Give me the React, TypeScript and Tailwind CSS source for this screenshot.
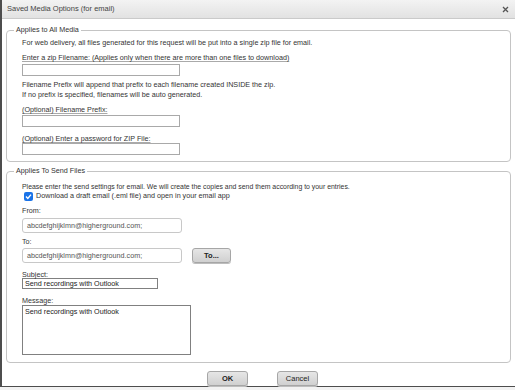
import React from "react";

const font = { fontFamily: '"Liberation Sans", Arial, sans-serif' };

const Label = ({ children, className = "" }: { children: React.ReactNode; className?: string }) => (
  <div className={`h-[10px] leading-[10px] text-[7.2px] text-[#333] whitespace-nowrap ${className}`}>{children}</div>
);

const ZipInput = ({ className = "" }: { className?: string }) => (
  <input
    type="text"
    className={`block w-[158px] h-[12px] border border-[#a9a9a9] bg-white outline-none ${className}`}
  />
);

const GrayButton = ({ label, className = "" }: { label: string; className?: string }) => (
  <button
    className={`h-[15px] rounded-[3px] border border-[#a6a6a6] bg-gradient-to-b from-[#e6e6e6] to-[#d0d0d0] text-[7.5px] leading-[13px] text-[#222] shadow-[0_1px_0_#bdbdbd] ${className}`}
  >
    {label}
  </button>
);

export default function App() {
  return (
    <div style={font} className="w-[515px] h-[390px] bg-[#f2f2f2] overflow-hidden">
      <div className="h-[387px] bg-white border-l-[2px] border-b-[1px] border-[#4d4d4d] flex flex-col">
        {/* title bar */}
        <div className="h-[19px] shrink-0 flex items-center justify-between pl-[5px] pr-[6px] bg-gradient-to-b from-[#f3f3f3] to-[#e2e2e2] border-b border-[#cacaca]">
          <span className="text-[7.5px] text-[#444]">Saved Media Options (for email)</span>
          <svg width="7" height="7" viewBox="0 0 7 7" className="mt-[1px]">
            <path d="M1 1L6 6M6 1L1 6" stroke="#555" strokeWidth="1.3" />
          </svg>
        </div>

        <div className="px-[4px]">
          {/* Applies to All Media */}
          <fieldset className="mt-[6px] border border-[#c4c4c4] rounded-[4px] pl-[15px] pr-[10px] pt-[3px] pb-[6px]">
            <legend className="ml-[-8px] px-[2px] h-[10px] leading-[10px] text-[7.2px] text-[#333]">Applies to All Media</legend>
            <Label>For web delivery, all files generated for this request will be put into a single zip file for email.</Label>
            <Label className="mt-[5px] underline decoration-[#aaa]">
              Enter a zip Filename: (Applies only when there are more than one files to download)
            </Label>
            <ZipInput className="mt-[1px]" />
            <Label className="mt-[4px]">Filename Prefix will append that prefix to each filename created INSIDE the zip.</Label>
            <Label>If no prefix is specified, filenames will be auto generated.</Label>
            <Label className="mt-[5px] underline decoration-[#aaa]">(Optional) Filename Prefix:</Label>
            <ZipInput />
            <Label className="mt-[7px] underline decoration-[#aaa]">(Optional) Enter a password for ZIP File:</Label>
            <ZipInput className="-mt-[1px]" />
          </fieldset>

          {/* Applies To Send Files */}
          <fieldset className="mt-[4px] border border-[#c4c4c4] rounded-[4px] pl-[15px] pr-[10px] pt-[6px] pb-[7px]">
            <legend className="ml-[-8px] px-[2px] h-[10px] leading-[10px] text-[7.2px] text-[#333]">Applies To Send Files</legend>
            <div className="h-[9px] leading-[9px] text-[6.9px] text-[#333] whitespace-nowrap">
              Please enter the send settings for email. We will create the copies and send them according to your entries.
            </div>
            <div className="h-[10px] flex items-center gap-[3px] pl-[2px] text-[7.2px] text-[#333]">
              <span className="w-[9px] h-[9px] rounded-[2px] bg-[#1a73e8] flex items-center justify-center">
                <svg width="7" height="7" viewBox="0 0 7 7">
                  <path d="M1 3.6L2.8 5.4L6 1.6" stroke="white" strokeWidth="1.4" fill="none" />
                </svg>
              </span>
              <span>Download a draft email (.eml file) and open in your email app</span>
            </div>

            <Label className="mt-[5px]">From:</Label>
            <div className="mt-[2px] w-[160px] h-[15px] rounded-[3px] border border-[#c8c8c8] pl-[4px] text-[7.2px] leading-[13px] text-[#555]">
              abcdefghijklmn@higherground.com;
            </div>

            <Label className="mt-[4px]">To:</Label>
            <div className="mt-[1px] flex items-start gap-[10px]">
              <div className="w-[160px] h-[15px] rounded-[3px] border border-[#c8c8c8] pl-[4px] text-[7.2px] leading-[13px] text-[#555]">
                abcdefghijklmn@higherground.com;
              </div>
              <GrayButton label="To..." className="w-[39px] h-[14px] font-bold" />
            </div>

            <Label className="mt-[7px]">Subject:</Label>
            <div className="-mt-[2px] w-[136px] h-[11px] border border-[#808080] pl-[2px] text-[7.2px] leading-[9px] text-[#222] whitespace-nowrap">
              Send recordings with Outlook
            </div>

            <Label className="mt-[7px]">Message:</Label>
            <div className="-mt-[1px] w-[169px] h-[50px] border border-[#808080] pl-[2px] pt-[1px] text-[7.2px] leading-[9px] text-[#222]">
              Send recordings with Outlook
            </div>
          </fieldset>
        </div>

        {/* buttons */}
        <div className="mt-[8px] pl-[8px] flex justify-center gap-[29px]">
          <GrayButton label="OK" className="w-[41px] font-bold" />
          <GrayButton label="Cancel" className="w-[41px]" />
        </div>
      </div>
    </div>
  );
}
